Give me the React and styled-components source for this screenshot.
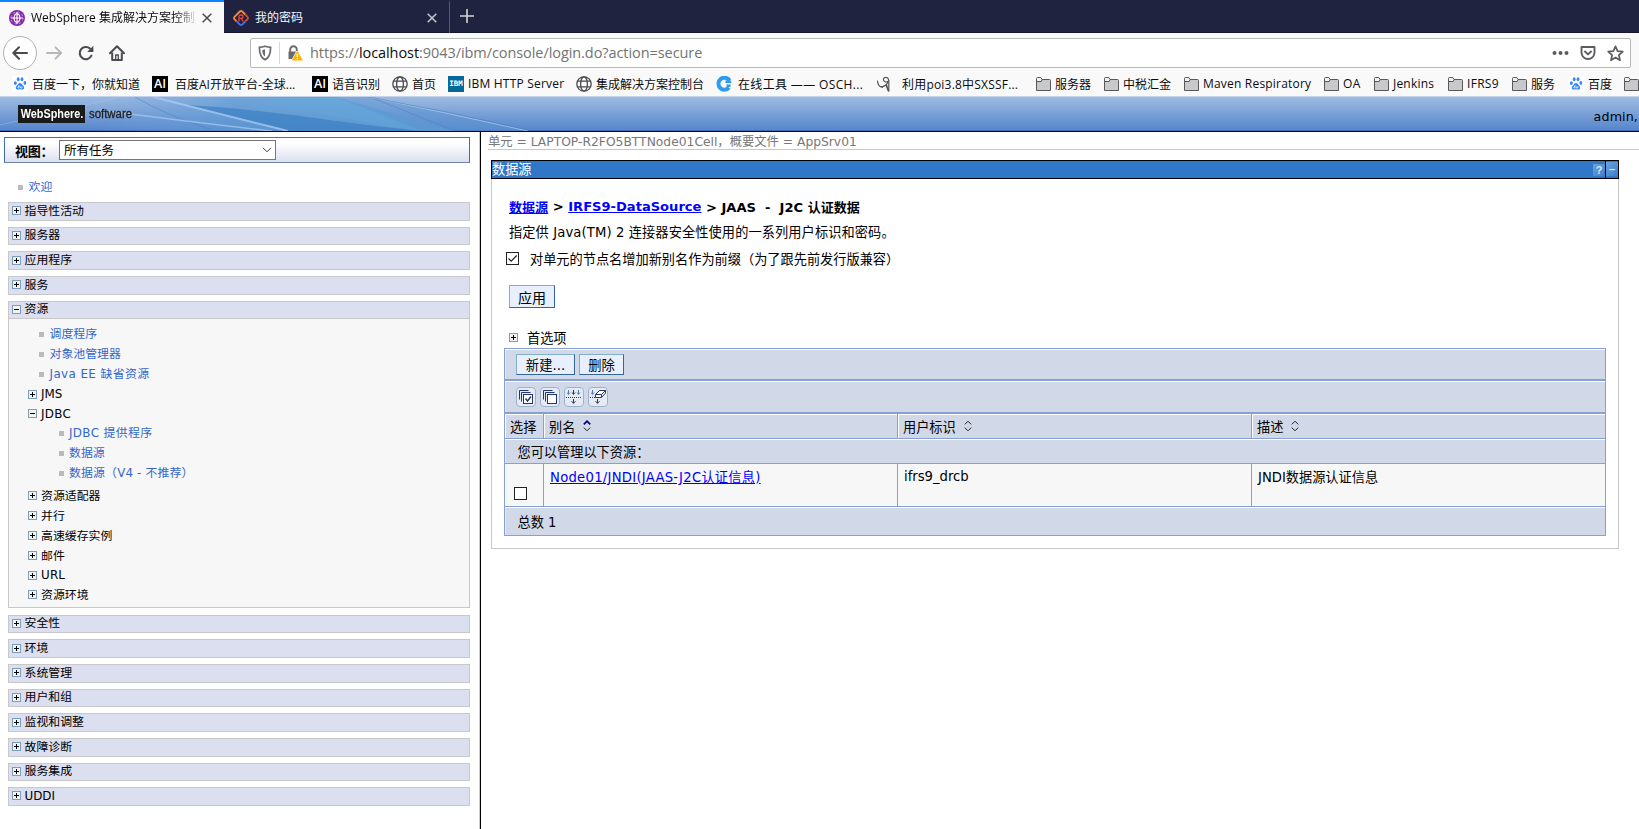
import React from 'react';
import styled, { createGlobalStyle } from 'styled-components';

const verdana = '"DejaVu Sans", "Noto Sans CJK SC", sans-serif';
const segoe = '"Open Sans", "Noto Sans CJK SC", sans-serif';

const GlobalStyle = createGlobalStyle`
  * { box-sizing: border-box; }
  body {
    margin: 0;
    background: #fff;
    overflow: hidden;
    font-family: ${verdana};
    color: #000;
  }
  svg { flex: none; }
`;

const Page = styled.div`
  width: 1639px;
  height: 829px;
  display: flex;
  flex-direction: column;
  overflow: hidden;
`;

/* browser tabs */
const TabBar = styled.div`
  height: 33px;
  flex: none;
  display: flex;
  background: #202340;
  border-bottom: 1px solid #15172c;
  font: 12px ${segoe};
`;

const Tab = styled.div`
  width: ${p => p.$width}px;
  height: 33px;
  display: flex;
  align-items: center;
  padding: 0 12px 0 9px;
  color: ${p => (p.$active ? '#0c0c0d' : '#f9f9fa')};
  background: ${p => (p.$active ? '#f9f9fa' : 'transparent')};
  border-top: 2px solid ${p => (p.$active ? '#0a84ff' : 'transparent')};
  border-right: ${p => (p.$active ? 'none' : '1px solid #55586e')};
`;

const TabTitle = styled.span`
  flex: 1;
  min-width: 0;
  margin: 0 4px 2px 6px;
  white-space: nowrap;
  letter-spacing: ${p => p.$spacing || 0}px;
  mask-image: ${p => (p.$fade ? 'linear-gradient(to right, #000 86%, transparent 100%)' : 'none')};
`;

const NewTab = styled.div`
  width: 33px;
  display: flex;
  align-items: center;
  justify-content: center;
`;

/* navigation bar */
const NavBar = styled.div`
  height: 38px;
  flex: none;
  display: flex;
  align-items: center;
  background: #f9f9fa;
  padding: 3px 8px 1px 3px;
`;

const BackButton = styled.div`
  width: 34px;
  height: 34px;
  border: 1px solid #b1b1b3;
  border-radius: 50%;
  background: #fff;
  display: flex;
  align-items: center;
  justify-content: center;
`;

const NavIcons = styled.div`
  width: 213px;
  padding-left: 8px;
  display: flex;
  gap: 14px;
`;

const UrlBox = styled.div`
  flex: 1;
  height: 30px;
  border: 1px solid #b8b8ba;
  border-radius: 2px;
  background: #fff;
  display: flex;
  align-items: center;
  padding: 0 6px 0 6px;
  font: 14.5px ${segoe};
  color: #737373;
`;

const UrlDivider = styled.i`
  width: 1px;
  height: 22px;
  margin: 0 7px 0 6px;
  background: #d7d7db;
`;

const UrlText = styled.span`
  flex: 1;
  margin: 0 0 2px 7px;
  letter-spacing: -0.07px;
  b { font-weight: 400; color: #0c0c0d; }
`;

const UrlActions = styled.div`
  display: flex;
  align-items: center;
  gap: 11px;
`;

/* bookmarks */
const Bookmarks = styled.div`
  height: 25px;
  flex: none;
  display: flex;
  align-items: center;
  padding-left: 12px;
  background: #f9f9fa;
  font: 12px ${segoe};
  color: #0c0c0d;
`;

const Bookmark = styled.div`
  width: ${p => p.$width}px;
  flex: none;
  display: flex;
  align-items: center;
  gap: ${p => p.$gap || 4}px;
  white-space: nowrap;
  letter-spacing: ${p => p.$spacing || 0}px;
`;

const Badge = styled.span`
  width: 16px;
  height: 16px;
  flex: none;
  background: ${p => p.$bg};
  color: #fff;
  font: ${p => p.$font};
  line-height: 16px;
  text-align: center;
  letter-spacing: 0;
`;

/* product banner */
const Banner = styled.header`
  height: 36px;
  flex: none;
  position: relative;
  display: flex;
  align-items: center;
  padding: 0 1px 0 18px;
  background: linear-gradient(#9dbbe2, #5485cb);
  border-top: 1px solid #c3d3ea;
  border-bottom: 1px solid #000;
  box-shadow: inset 0 -1px #3a6fc0;
`;

const Swoosh = styled.svg`
  position: absolute;
  left: 0;
  top: 0;
`;

const Brand = styled.div`
  position: relative;
  display: flex;
  align-items: center;
  gap: 4px;
  flex: 1;
  font: 12.5px "Liberation Sans", sans-serif;
  color: #222;
`;

const BrandBox = styled.b`
  width: 67px;
  height: 18px;
  display: flex;
  justify-content: center;
  line-height: 18px;
  background: #1a1a1a;
  color: #fff;
`;

// squeezes the regular face to the condensed look of the product name
const Condensed = styled.span`
  display: inline-block;
  transform: scaleX(${p => p.$scale});
  transform-origin: ${p => p.$origin || 'center'};
  -webkit-text-stroke: ${p => p.$stroke || 0}px currentColor;
`;

const UserName = styled.span`
  position: relative;
  font-size: 12.7px;
  letter-spacing: 0.1px;
  padding-top: 4px;
`;

/* frames */
const Frames = styled.div`
  flex: 1;
  display: flex;
`;

const NavFrame = styled.nav`
  width: 481px;
  border-right: 1px solid #000;
  box-shadow: inset -1px 0 #ccc;
  padding: 5px 10px 0 4px;
  font-size: 12px;
`;

const ViewBar = styled.div`
  height: 26px;
  display: flex;
  align-items: center;
  margin-bottom: 14px;
  padding-left: 10px;
  border: 1px solid #3a6fb0;
  border-bottom-color: #6f85a8;
  background: linear-gradient(#fff 20%, #dcdfef);
  font-size: 13px;
  b { width: 44px; letter-spacing: -0.3px; }
`;

const Select = styled.div`
  width: 217px;
  height: 20px;
  display: flex;
  align-items: center;
  justify-content: space-between;
  padding: 2px 3px 0 4px;
  border: 1px solid #767676;
  background: #fff;
  font-size: 12.5px;
  line-height: 16px;
  svg { margin-bottom: 2px; }
`;

const Welcome = styled.div`
  margin-bottom: 5px;
`;

const Item = styled.div`
  height: ${p => p.$height || 20}px;
  margin-top: ${p => p.$top || 0}px;
  padding-left: ${p => p.$indent}px;
  display: flex;
  align-items: center;
  gap: ${p => (p.$link ? 5.5 : 4)}px;
  color: ${p => (p.$link ? '#3366cc' : '#000')};
  font-size: 11.9px;
  line-height: 18px;
  letter-spacing: ${p => p.$spacing || 0}px;
  white-space: pre;
`;

const Bullet = styled.i`
  width: 5px;
  height: 5px;
  background: #bbb;
`;

const Section = styled.div`
  height: 18.67px;
  margin: 0 0 6px 4px;
  padding: 0 0 1px 3px;
  display: flex;
  align-items: center;
  gap: 3.5px;
  border: 1px solid #c8c8c8;
  background: #dcdfef;
  font-size: 11.9px;
  line-height: 16px;
  ${p => p.$open && 'margin-bottom: 0;'}
`;

const SubTree = styled.div`
  height: 288.9px;
  margin: 0 0 6.4px 4px;
  padding-top: 5px;
  border: 1px solid #c8c8c8;
  border-top: none;
  background: #f7f7f7;
`;

const Main = styled.main`
  flex: 1;
  padding-left: 8px;
  font-size: 13.2px;
`;

const CellInfo = styled.div`
  height: 18px;
  line-height: 20px;
  margin-left: -1px;
  border-bottom: 1px solid #c8c8c8;
  color: #777;
  font-size: 12.3px;
  white-space: pre;
`;

const Portlet = styled.section`
  width: 1128px;
  margin: 10px 0 0 2px;
`;

const PortletTitle = styled.div`
  height: 19px;
  display: flex;
  align-items: center;
  border: 1px solid #000;
  background: #3177c8;
  color: #fff;
  line-height: 17px;
  span { flex: 1; }
`;

const TitleButton = styled.div`
  width: 12px;
  height: ${p => p.$height}px;
  margin-bottom: ${p => p.$bottom || 0}px;
  background: linear-gradient(135deg, #6ba4dc, #3c7fca);
  display: flex;
  align-items: center;
  justify-content: center;
  font: bold 11px "Liberation Sans", sans-serif;
  color: #d8e8f8;
`;

const TitleDivider = styled.i`
  width: 1px;
  height: 17px;
  background: #000;
`;

const PortletBody = styled.div`
  height: 370px;
  border: 1px solid #c8c8c8;
  border-top: none;
  padding: 15px 12px 0;
`;

const Line = styled.div`
  height: ${p => p.$height}px;
  margin: ${p => p.$top || 0}px 0 0 ${p => p.$left || 0}px;
  display: flex;
  align-items: center;
  gap: ${p => p.$gap || 0}px;
  white-space: pre;
  letter-spacing: ${p => p.$spacing || 0}px;
`;

const Crumbs = styled(Line)`
  font-weight: bold;
  font-size: 13.07px;
`;

const Link = styled.a`
  color: #0000ff;
  text-decoration: underline;
`;

const Checkbox = styled.span`
  width: 13px;
  height: 13px;
  flex: none;
  border: 1px solid #222;
  background: #fff;
  display: flex;
`;

const Button = styled.button`
  width: ${p => p.$width}px;
  height: ${p => p.$height || 21}px;
  margin: 0;
  padding: 3px 0 0;
  border: 1px solid;
  border-color: #82aecb #336699 #336699 #82aecb;
  background: #e8f0ff;
  font: ${p => p.$size || 13.3}px/16px ${verdana};
  color: #000;
`;

const Table = styled.div`
  margin-top: 1px;
  border: 1px solid #86a0d6;
`;

const Band = styled.div`
  height: ${p => p.$height}px;
  padding-left: ${p => p.$left}px;
  display: flex;
  align-items: center;
  gap: 4px;
  background: #d1d8e8;
  border-bottom: ${p => p.$rule || 0}px solid #86a0d6;
  box-shadow: inset 0 1px #fff, inset 1px 0 #e6eaf4;
`;

const Row = styled.div`
  display: grid;
  grid-template-columns: 39px 354px 354px 1fr;
  height: ${p => p.$height}px;
  border-bottom: 1px solid #86a0d6;
`;

const HeadCell = styled.div`
  display: flex;
  align-items: center;
  gap: 8px;
  padding-left: 5px;
  background: #d1d8e8;
  border-right: ${p => (p.$last ? 0 : 1)}px solid #86a0d6;
  box-shadow: inset 1px 1px #fff;
`;

const Cell = styled.div`
  padding: ${p => p.$pad || '4px 0 0 6px'};
  background: #f7f7f7;
  border-right: ${p => (p.$last ? 0 : 1)}px solid #86a0d6;
  line-height: 20px;
  letter-spacing: ${p => p.$spacing || 0}px;
`;

const ToolIcon = styled.svg`
  width: 20px;
  height: 20px;
`;

function GlobeIcon() {
  return (
    <svg width="16" height="16" viewBox="0 0 16 16" fill="none" stroke="#4a4a4f" strokeWidth="1.3">
      <circle cx="8" cy="8" r="7.2" />
      <ellipse cx="8" cy="8" rx="3.4" ry="7.2" />
      <path d="M1.6 5.2h12.8M1.6 10.8h12.8" />
    </svg>
  );
}

function SphereIcon() {
  return (
    <svg width="16" height="16" viewBox="0 0 16 16" fill="none" stroke="#fff" strokeWidth="1.2">
      <circle cx="8" cy="8" r="8" fill="#8427ab" stroke="none" />
      <circle cx="8" cy="8" r="6" strokeWidth=".7" strokeDasharray="2.6 2" stroke="#dcb8ec" />
      <ellipse cx="8" cy="8" rx="2.9" ry="4.2" />
      <path d="M8 2v12M2 8h12" />
    </svg>
  );
}

function KeyIcon() {
  return (
    <svg width="16" height="16" viewBox="0 0 16 16" fill="none" strokeWidth="1.8" strokeLinejoin="round">
      <path d="M3.600 11.400L1.500 9.200q-1-1.200 0-2.400l5.300-5.300q1.200-1 2.400 0l3 3" stroke="#f58a3c" />
      <path d="M12.200 4.500l2.300 2.300q1 1.200 0 2.400l-2.300 2.300" stroke="#d8483f" />
      <path d="M3.600 11.400l3.200 3.100q1.200 1 2.400 0l3-3" stroke="#4a6be0" />
      <path d="M6 11.500V6.400q0-1.400 2-1.400t2 1.700-2 1.700H6.500M8.200 8.500l2 3" stroke="#e8453c" strokeWidth="1.300" />
    </svg>
  );
}

function CloseIcon({ color }) {
  return (
    <svg width="10" height="10" viewBox="0 0 10 10" stroke={color} strokeWidth="1.5">
      <path d="M.7.7l8.6 8.6M9.3.7L.7 9.3" />
    </svg>
  );
}

function PawIcon() {
  return (
    <svg width="16" height="16" viewBox="-1.300 -1 18.600 18.600" fill="#3385ff">
      <rect x="-1.300" y="-1" width="18.600" height="18.600" fill="#fff" />
      <ellipse cx="2.600" cy="7.200" rx="1.700" ry="2.200" />
      <ellipse cx="5.900" cy="2.800" rx="1.600" ry="2.300" />
      <ellipse cx="10.300" cy="2.800" rx="1.600" ry="2.300" />
      <ellipse cx="13.600" cy="7" rx="1.600" ry="2.200" />
      <path d="M8 7c1.600 0 2.200 1.600 3.600 2.900 2 1.900 1.400 4.800-.8 4.900-1.100 0-1.800-.3-2.800-.3s-1.700.3-2.800.3c-2.200-.1-2.800-3-.8-4.900C5.800 8.600 6.400 7 8 7z" />
      <path d="M6.900 9.500v3.600M6.900 11.200c-2-.4-2 2.200 0 1.800M8.700 11v2h1.600v-2" fill="none" stroke="#fff" strokeWidth=".8" />
    </svg>
  );
}

function FolderIcon() {
  return (
    <svg width="16" height="16" viewBox="0 0 16 16" fill="#c9c9cb" stroke="#58585c">
      <path d="M1.500 14.500v-12q0-1 1-1h3.300l1.200 2h7.500q1 0 1 1v10z" />
      <path d="M2 2h3.500l1 1.700-.7 1.300H2z" fill="#f3f3f4" stroke="none" />
      <path d="M1.500 5.500h4.700l1-2" fill="none" />
    </svg>
  );
}

function OscIcon() {
  return (
    <svg width="16" height="16" viewBox="0 0 16 16" fill="none">
      <path d="M13.600 4.600A6 6 0 1 0 13 11.600" stroke="#2e9bf0" strokeWidth="4" />
      <path d="M9.500 5.700h5.800M10.500 9.800h4" stroke="#2e9bf0" strokeWidth="2.400" />
    </svg>
  );
}

function BirdIcon() {
  return (
    <svg width="16" height="16" viewBox="0 0 16 16" fill="none" stroke="#555" strokeWidth="1.200" strokeLinecap="round">
      <path d="M1.500 5c.3 3.500 1.800 6 5 6.300M5 10.800c3.500-.2 6-2 7-5" />
      <path d="M12.800 15.200V4.200c-.4-3.200-5-3.900-5.400-.9-.2 2.600 3.500 3.700 5.200 1.500" />
      <path d="M12.300 14.500L10.500 9.500" strokeWidth="1.700" />
    </svg>
  );
}

function Toggle({ open }) {
  return (
    <svg width="9" height="9" viewBox="0 0 9 9" shapeRendering="crispEdges">
      <rect x=".5" y=".5" width="8" height="8" fill="#f2f2ee" stroke="#7b9ebd" />
      <path d="M2 4.500h5" stroke="#000" />
      {!open && <path d="M4.500 2v5" stroke="#000" />}
    </svg>
  );
}

function SortIcon({ active }) {
  return (
    <svg width="8" height="12" viewBox="0 0 8 12" fill="none" stroke="#222">
      <path d="M.8 4.400L4 1.200l3.200 3.200" stroke={active ? '#00007f' : '#222'} strokeWidth={active ? 1.700 : 1} />
      <path d="M.8 7.600L4 10.800l3.200-3.200" />
    </svg>
  );
}

function ToolButton({ children }) {
  return (
    <ToolIcon viewBox="0 0 20 20" fill="none" stroke="#24356a">
      <rect x=".5" y=".5" width="19" height="19" rx="3.500" fill="#e6ebf3" stroke="#9db1cf" />
      {children}
    </ToolIcon>
  );
}

function TreeItem({ item }) {
  const isLink = item.kind === 'link';
  return (
    <Item
      $indent={item.indent}
      $link={isLink}
      $height={item.height}
      $top={item.top}
      $spacing={item.spacing}
    >
      {isLink ? <Bullet /> : <Toggle open={item.open} />}
      <span>{item.label}</span>
    </Item>
  );
}

const topSections = ['指导性活动', '服务器', '应用程序', '服务'];
const bottomSections = ['安全性', '环境', '系统管理', '用户和组', '监视和调整', '故障诊断', '服务集成', 'UDDI'];

const resources = [
  { kind: 'link', label: '调度程序', indent: 30 },
  { kind: 'link', label: '对象池管理器', indent: 30 },
  { kind: 'link', label: 'Java EE 缺省资源', indent: 30, spacing: 0.4 },
  { label: 'JMS', indent: 19 },
  { label: 'JDBC', indent: 19, open: true, height: 19, spacing: 0.3 },
  { kind: 'link', label: 'JDBC 提供程序', indent: 49.5, spacing: 0.35 },
  { kind: 'link', label: '数据源', indent: 49.5 },
  { kind: 'link', label: '数据源（V4 - 不推荐）', indent: 49.5, spacing: 0.15 },
  { label: '资源适配器', indent: 19, top: 2.5 },
  { label: '并行', indent: 19 },
  { label: '高速缓存实例', indent: 19 },
  { label: '邮件', indent: 19, height: 19.5 },
  { label: 'URL', indent: 19, height: 19.5, spacing: 0.2 },
  { label: '资源环境', indent: 19 },
];

const ai = <Badge $bg="#000" $font={`600 12.5px ${segoe}`}>AI</Badge>;
const ibm = <Badge $bg="#06699c" $font={'bold 7.5px "DejaVu Sans Mono", monospace'}>IBM</Badge>;

const bookmarks = [
  { icon: <PawIcon />, label: '百度一下，你就知道', width: 140 },
  { icon: ai, label: '百度AI开放平台-全球...', width: 160, gap: 7 },
  { icon: ai, label: '语音识别', width: 80 },
  { icon: <GlobeIcon />, label: '首页', width: 56 },
  { icon: ibm, label: 'IBM HTTP Server', width: 128, spacing: 0.2 },
  { icon: <GlobeIcon />, label: '集成解决方案控制台', width: 140 },
  { icon: <OscIcon />, label: '在线工具 —— OSCH...', width: 160, gap: 6, spacing: 0.35 },
  { icon: <BirdIcon />, label: '利用poi3.8中SXSSF...', width: 159, gap: 10, spacing: 0.2 },
  { icon: <FolderIcon />, label: '服务器', width: 68 },
  { icon: <FolderIcon />, label: '中税汇金', width: 80 },
  { icon: <FolderIcon />, label: 'Maven Respiratory', width: 140, spacing: 0.2 },
  { icon: <FolderIcon />, label: 'OA', width: 50, spacing: 0.3 },
  { icon: <FolderIcon />, label: 'Jenkins', width: 74, spacing: 0.2 },
  { icon: <FolderIcon />, label: 'IFRS9', width: 64, spacing: 0.3 },
  { icon: <FolderIcon />, label: '服务', width: 57 },
  { icon: <PawIcon />, label: '百度', width: 55 },
  { icon: <FolderIcon />, label: '', width: 16 },
];

class App extends React.Component {
  renderChrome() {
    return (
      <>
        <TabBar>
          <Tab $active $width={224}>
            <SphereIcon />
            <TabTitle $fade>WebSphere 集成解决方案控制</TabTitle>
            <CloseIcon color="#4a4a4f" />
          </Tab>
          <Tab $width={226}>
            <KeyIcon />
            <TabTitle>我的密码</TabTitle>
            <CloseIcon color="#c8c8cf" />
          </Tab>
          <NewTab>
            <svg width="14" height="14" viewBox="0 0 14 14" stroke="#d5d5dc" strokeWidth="1.600">
              <path d="M7 0v14M0 7h14" />
            </svg>
          </NewTab>
        </TabBar>
        <NavBar>
          <BackButton>
            <svg width="16" height="14" viewBox="0 0 16 14" fill="none" stroke="#4a4a4f" strokeWidth="2" strokeLinecap="round" strokeLinejoin="round">
              <path d="M15 7H1.500M7 1.300L1.300 7 7 12.700" />
            </svg>
          </BackButton>
          <NavIcons>
            <svg width="18" height="16" viewBox="0 0 18 16" fill="none" stroke="#b8b8ba" strokeWidth="1.900" strokeLinecap="round" strokeLinejoin="round">
              <path d="M2 8h14M10.500 2.300L16.200 8l-5.700 5.700" />
            </svg>
            <svg width="18" height="16" viewBox="0 0 18 16" fill="none" stroke="#4a4a4f" strokeWidth="2.100">
              <path d="M14.400 10.600A6.100 6.100 0 1 1 13 3.600" strokeLinecap="round" />
              <path d="M16.400.8v6.200h-6.200z" fill="#4a4a4f" stroke="none" />
            </svg>
            <svg width="16" height="16" viewBox="0 0 16 16" fill="none" stroke="#4a4a4f" strokeWidth="2" strokeLinejoin="round">
              <path d="M1 8.300L8 1.300l7 7" strokeLinecap="round" />
              <path d="M3.200 7.500V15h9.600V7.500" />
              <path d="M6.700 14.500V10h2.600v4.500" strokeWidth="1.300" />
            </svg>
          </NavIcons>
          <UrlBox>
            <svg width="16" height="16" viewBox="0 0 16 16" fill="none" stroke="#6a6a6e" strokeWidth="1.700">
              <path d="M2.400 2.400Q5 2.200 8 1.200q3 1 5.600 1.200c0 5.500-1 10-5.600 12.400C3.400 12.400 2.400 7.900 2.400 2.400z" />
              <path d="M8 4.300v7.200C5.800 10 5.300 7.600 5.300 5z" fill="#6a6a6e" stroke="none" />
            </svg>
            <UrlDivider />
            <svg width="16" height="16" viewBox="0 0 16 16">
              <path d="M3.200 7V4.600a3.300 3.300 0 0 1 6.600 0V6" fill="none" stroke="#6a6a6e" strokeWidth="1.900" />
              <path d="M1.500 6.500h7.500L5 14H1.500z" fill="#6a6a6e" />
              <path d="M10.300 5.500l5.500 10H4.800z" fill="#ffb200" />
              <path d="M10.300 8.800v3.200M10.300 13v1.300" stroke="#fff" strokeWidth="1.300" />
            </svg>
            <UrlText>https://<b>localhost</b>:9043/ibm/console/login.do?action=secure</UrlText>
            <UrlActions>
              <svg width="17" height="16" viewBox="0 0 17 16" fill="#5c5c60">
                <circle cx="2.500" cy="8" r="2" />
                <circle cx="8.500" cy="8" r="2" />
                <circle cx="14.500" cy="8" r="2" />
              </svg>
              <svg width="16" height="16" viewBox="0 0 16 16" fill="none" stroke="#5c5c60" strokeWidth="1.900" strokeLinecap="round" strokeLinejoin="round">
                <path d="M1.500 2h13v5.500a6.500 6.500 0 0 1-13 0z" />
                <path d="M5 6.500l3 2.900 3-2.900" />
              </svg>
              <svg width="17" height="17" viewBox="0 0 17 17" fill="none" stroke="#5c5c60" strokeWidth="1.700" strokeLinejoin="round">
                <path d="M8.500 1.300l2.100 4.800 5.200.5-3.900 3.500 1.100 5.200-4.500-2.700L4 15.300l1.100-5.200L1.200 6.600l5.200-.5z" />
              </svg>
            </UrlActions>
          </UrlBox>
        </NavBar>
        <Bookmarks>
          {bookmarks.map((b, i) => (
            <Bookmark key={i} $width={b.width} $gap={b.gap} $spacing={b.spacing}>
              {b.icon}
              <span>{b.label}</span>
            </Bookmark>
          ))}
        </Bookmarks>
      </>
    );
  }

  renderBanner() {
    return (
      <Banner>
        <Swoosh width="540" height="34" viewBox="0 0 540 34">
          <defs>
            <linearGradient id="wave" x1="0" x2="1">
              <stop offset="0" stopColor="#7ba4da" stopOpacity="0" />
              <stop offset=".4" stopColor="#5c9ad4" />
              <stop offset="1" stopColor="#5fa3d8" />
            </linearGradient>
          </defs>
          <path d="M100 0h235L455 34H90z" fill="url(#wave)" opacity=".7" />
          <path d="M335 0h38l155 34H420z" fill="#5b93cf" opacity=".5" />
          <path d="M185 8q60 3 130 13t110 13H285z" fill="#3178bd" opacity=".55" />
          <path d="M270 0h70l82 34q-40-4-152-28z" fill="#62a8dc" opacity=".4" />
          <path d="M135 0q30 18 80 34" fill="none" stroke="#4a80c4" opacity=".5" />
          <path d="M100 13q90 12 172 21" fill="none" stroke="#a9cbf0" strokeWidth="1.500" opacity=".7" />
          <path d="M153 0L288 34" fill="none" stroke="#a9cbf0" strokeWidth="2" opacity=".8" />
          <path d="M0 28L120 0" fill="none" stroke="#a5c4ec" opacity=".5" />
          <path d="M375 2L455 34" fill="none" stroke="#4a80c4" opacity=".5" />
          <path d="M368 0q80 16 160 34" fill="none" stroke="#a8c8f0" opacity=".8" />
          <path d="M368 0q80 14 160 33" fill="none" stroke="#4676bb" strokeWidth=".8" opacity=".6" />
        </Swoosh>
        <Brand>
          <BrandBox><Condensed $scale={0.87}>WebSphere.</Condensed></BrandBox>
          <Condensed $scale={0.91} $origin="left" $stroke={0.3}>software</Condensed>
        </Brand>
        <UserName>admin,</UserName>
      </Banner>
    );
  }

  renderNav() {
    return (
      <NavFrame>
        <ViewBar>
          <b>视图：</b>
          <Select>
            所有任务
            <svg width="10" height="6" viewBox="0 0 10 6" fill="none" stroke="#444">
              <path d="M1 .8l4 4 4-4" />
            </svg>
          </Select>
        </ViewBar>
        <Welcome>
          <Item $indent={14} $link><Bullet /><span>欢迎</span></Item>
        </Welcome>
        {topSections.map(label => (
          <Section key={label}><Toggle />{label}</Section>
        ))}
        <Section $open><Toggle open />资源</Section>
        <SubTree>
          {resources.map(item => <TreeItem key={item.label} item={item} />)}
        </SubTree>
        {bottomSections.map(label => (
          <Section key={label}><Toggle />{label}</Section>
        ))}
      </NavFrame>
    );
  }

  renderTable() {
    return (
      <Table>
        <Band $height={32} $left={11} $rule={2}>
          <Button $width={59}>新建...</Button>
          <Button $width={45}>删除</Button>
        </Band>
        <Band $height={33} $left={11} $rule={2}>
          <ToolButton>
            <path d="M3.500 12.500v-9h9M5.500 14.500v-9h9" />
            <rect x="7.500" y="7.500" width="9" height="9" fill="#fff" />
            <path d="M9.500 11.500l2 2.500 3.500-4.500" strokeWidth="1.400" />
          </ToolButton>
          <ToolButton>
            <path d="M3.500 12.500v-9h9M5.500 14.500v-9h9" />
            <rect x="7.500" y="7.500" width="9" height="9" fill="#fff" />
          </ToolButton>
          <ToolButton>
            <path d="M2 10.500h16" strokeDasharray="1 1" />
            <path d="M4.500 3v4.500M2.800 5.500l1.700 1.700 1.700-1.700M14.500 3v4.500M12.800 5.500l1.700 1.700 1.700-1.700" stroke="#5878ae" />
            <path d="M9.500 3v4.500M7.800 5.500l1.700 1.700 1.700-1.700M9.500 12v4.500M7.500 14.200l2 2 2-2" />
          </ToolButton>
          <ToolButton>
            <path d="M2 10.500h10" strokeDasharray="1 1" />
            <path d="M4.500 3v4.500M2.800 5.500l1.700 1.700 1.700-1.700" stroke="#5878ae" />
            <path d="M9.500 12v4.500M7.500 14.200l2 2 2-2" />
            <path d="M7.500 7.500l4-4h6v2.500l-4 4.500h-6z" fill="#fff" />
            <path d="M7.500 7.500h6v2.500M13.500 7.500l4-4" />
          </ToolButton>
        </Band>
        <Row $height={25}>
          <HeadCell>选择</HeadCell>
          <HeadCell>别名<SortIcon active /></HeadCell>
          <HeadCell>用户标识<SortIcon /></HeadCell>
          <HeadCell $last>描述<SortIcon /></HeadCell>
        </Row>
        <Band $height={25} $left={12.5} $rule={1}>您可以管理以下资源：</Band>
        <Row $height={43}>
          <Cell $pad="23px 0 0 9px"><Checkbox /></Cell>
          <Cell $spacing={0.27}><Link>Node01/JNDI(JAAS-J2C认证信息)</Link></Cell>
          <Cell $pad="3px 0 0 6px">ifrs9_drcb</Cell>
          <Cell $last>JNDI数据源认证信息</Cell>
        </Row>
        <Band $height={28} $left={12.5}>总数 1</Band>
      </Table>
    );
  }

  render() {
    return (
      <Page>
        <GlobalStyle />
        {this.renderChrome()}
        {this.renderBanner()}
        <Frames>
          {this.renderNav()}
          <Main>
            <CellInfo>单元 = LAPTOP-R2FO5BTTNode01Cell，概要文件 = AppSrv01</CellInfo>
            <Portlet>
              <PortletTitle>
                <span>数据源</span>
                <TitleButton $height={12}>?</TitleButton>
                <TitleDivider />
                <TitleButton $height={14} $bottom={2}>–</TitleButton>
              </PortletTitle>
              <PortletBody>
                <Crumbs $left={5} $height={24}>
                  <Link>数据源</Link> &gt; <Link>IRFS9-DataSource</Link> &gt; JAAS  -  J2C 认证数据
                </Crumbs>
                <Line $left={5} $height={26} $spacing={0.11}>指定供 Java(TM) 2 连接器安全性使用的一系列用户标识和密码。</Line>
                <Line $left={2} $top={1} $height={26} $gap={11}>
                  <Checkbox>
                    <svg width="11" height="11" viewBox="0 0 11 11" fill="none" stroke="#222" strokeWidth="1.200">
                      <path d="M1.500 5.500l2.700 2.700L9.700 2.500" />
                    </svg>
                  </Checkbox>
                  对单元的节点名增加新别名作为前缀（为了跟先前发行版兼容）
                </Line>
                <Line $left={5} $top={14} $height={23}>
                  <Button $width={46} $height={23} $size={14}>应用</Button>
                </Line>
                <Line $left={5} $top={19} $height={20} $gap={9}><Toggle />首选项</Line>
                {this.renderTable()}
              </PortletBody>
            </Portlet>
          </Main>
        </Frames>
      </Page>
    );
  }
}

export default App;
